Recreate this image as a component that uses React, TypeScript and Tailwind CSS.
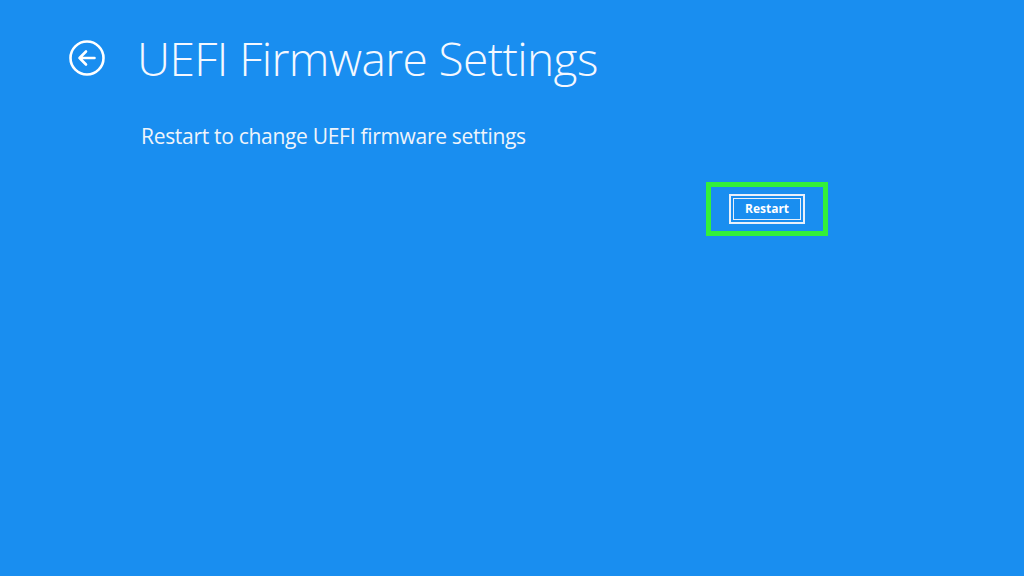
import React from "react";

function BackIcon() {
  return (
    <svg width="38" height="38" viewBox="0 0 38 38" fill="none" stroke="white" strokeWidth="2.6" strokeLinecap="round" strokeLinejoin="round">
      <circle cx="19" cy="19" r="16.5" />
      <path d="M11.5 19h15M18 12.5 11.5 19l6.5 6.5" />
    </svg>
  );
}

export default function App() {
  return (
    <div
      className="w-[1024px] h-[576px] overflow-hidden bg-[#198ef0] text-white"
      style={{ fontFamily: '"Open Sans", "Noto Sans", sans-serif' }}
    >
      <div className="flex items-center gap-[31px] pl-[68px] pt-[30px]">
        <BackIcon />
        <h1 className="text-[46px] font-light leading-[56px] tracking-[-0.6px] text-[#f4f8ff]">
          UEFI Firmware Settings
        </h1>
      </div>

      <p className="mt-[35px] pl-[141px] text-[21px] font-normal leading-[30px] tracking-[-0.3px] text-[#eef4fb]">
        Restart to change UEFI firmware settings
      </p>

      <div className="flex pl-[706px] mt-[31px]">
        <div className="border-[5px] border-[#33f03a] px-[18px] py-[7px]">
          <button className="border-2 border-[#e8f0fa] p-[2px]">
            <span className="block border border-[#e8f0fa] w-[68px] h-[22px] text-[12px] font-bold leading-[20px] text-white text-center">
              Restart
            </span>
          </button>
        </div>
      </div>
    </div>
  );
}
